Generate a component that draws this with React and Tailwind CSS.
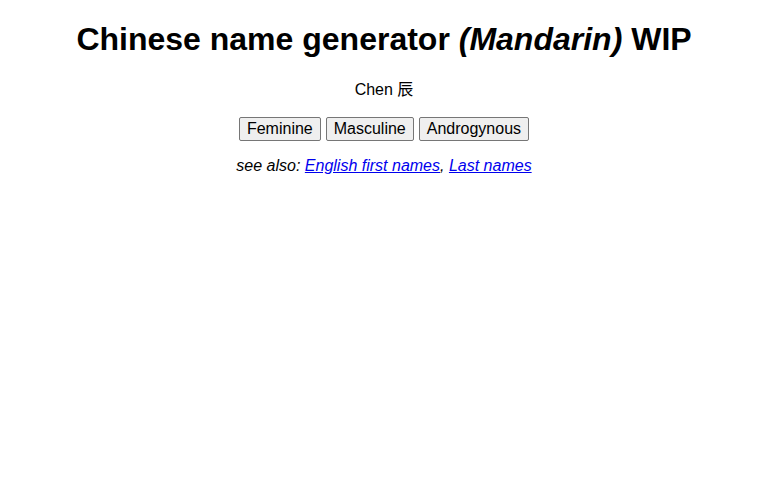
export default function App() {
  return (
    <div className="min-h-screen bg-white text-black text-center" style={{ fontFamily: '"Liberation Sans", "Noto Sans CJK SC", sans-serif' }}>
      <h1 className="pt-[21px] text-[32px] font-bold leading-[37px]">
        Chinese name generator <i>(Mandarin)</i> WIP
      </h1>
      <p className="mt-[21px] text-base leading-[18px]">
        Chen <span style={{ fontFamily: '"Noto Sans CJK SC", sans-serif' }}>辰</span>
      </p>
      <div className="mt-[18px] flex justify-center gap-[5px]">
        {['Feminine', 'Masculine', 'Androgynous'].map((label) => (
          <button
            key={label}
            type="button"
            className="h-6 rounded-[2px] border border-[#767676] bg-[#efefef] px-[7px] text-base leading-[18px]"
          >
            {label}
          </button>
        ))}
      </div>
      <p className="mt-[16px] text-base italic leading-[18px]">
        see also: <a href="#" className="text-[#0000ee] underline">English first names</a>,{' '}
        <a href="#" className="text-[#0000ee] underline">Last names</a>
      </p>
    </div>
  );
}
